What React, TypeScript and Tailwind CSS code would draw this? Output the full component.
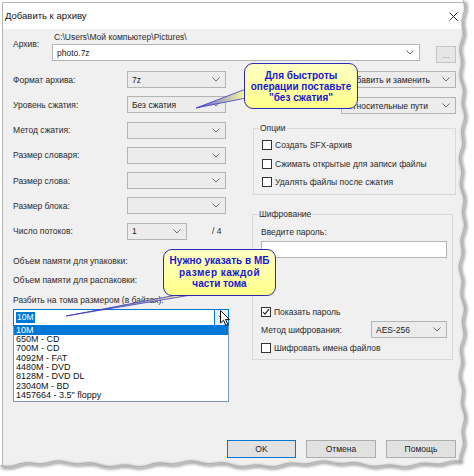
import React from 'react';

const font = "font-['Liberation_Sans',Arial,sans-serif]";

function Chevron() {
  return (
    <svg width="8" height="5" viewBox="0 0 8 5" className="shrink-0">
      <path d="M0.5 0.5 L4 4 L7.5 0.5" fill="none" stroke="#6a6a6a" strokeWidth="1" />
    </svg>
  );
}

function Combo({ text, className, white }: { text?: string; className: string; white?: boolean }) {
  return (
    <div
      className={`h-[17px] flex items-center justify-between pl-[4px] pr-[5px] border border-[#b4b4b4] ${
        white ? 'bg-white' : 'bg-[#ececec]'
      } ${className}`}
    >
      <span className="text-[#1a1a1a]">{text}</span>
      <Chevron />
    </div>
  );
}

function Check({ label, checked }: { label: string; checked?: boolean }) {
  return (
    <div className="h-[12px] flex items-center gap-[3px]">
      <div className="w-[10px] h-[10px] border border-[#333] bg-white flex items-center justify-center">
        {checked && (
          <svg width="8" height="8" viewBox="0 0 8 8">
            <path d="M1 4 L3 6.2 L7 1.2" fill="none" stroke="#222" strokeWidth="1.1" />
          </svg>
        )}
      </div>
      <span>{label}</span>
    </div>
  );
}

function Group({ title, className, children }: { title: string; className: string; children: React.ReactNode }) {
  return (
    <div className={`relative border border-[#d9d9d9] ${className}`}>
      <span className="absolute -top-[7px] left-[5px] px-[1px] bg-[#f0f0f0]">{title}</span>
      {children}
    </div>
  );
}

const rows = [
  { label: 'Формат архива:', value: '7z' },
  { label: 'Уровень сжатия:', value: 'Без сжатия' },
  { label: 'Метод сжатия:', value: '' },
  { label: 'Размер словаря:', value: '' },
  { label: 'Размер слова:', value: '' },
  { label: 'Размер блока:', value: '' },
];

const volumes = [
  '650M - CD',
  '700M - CD',
  '4092M - FAT',
  '4480M - DVD',
  '8128M - DVD DL',
  '23040M - BD',
  '1457664 - 3.5" floppy',
];

// torn paper edge on the right and bottom of the screenshot
function tornPoints() {
  const pts: string[] = [];
  for (let y = 0; y <= 462; y += 5) {
    const x = 462 + Math.sin(y * 0.23) * 1.3 + Math.sin(y * 0.061 + 1) * 1.6;
    pts.push(`${x.toFixed(1)},${y}`);
  }
  for (let x = 460; x >= 0; x -= 5) {
    const y = 464 + Math.sin(x * 0.19) * 1.2 + Math.sin(x * 0.047 + 2) * 2;
    pts.push(`${x},${y.toFixed(1)}`);
  }
  return pts;
}

export default function App() {
  const pts = tornPoints();
  const edge = 'M' + pts.join(' L');

  return (
    <div className={`relative w-[474px] h-[476px] bg-white overflow-hidden ${font} text-[8.5px] leading-[12px] text-[#2a2a2a]`}>
      <div className="ml-[2px] mt-[2px] w-[464px] h-[468px] bg-[#f0f0f0] border border-[#b8b8b8] flex flex-col">
        {/* title bar */}
        <div className="h-[26px] shrink-0 bg-white flex items-center justify-between pl-[2px] pr-[7px] text-[9.5px] text-[#111]">
          <span>Добавить к архиву</span>
          <svg width="9" height="9" viewBox="0 0 9 9">
            <path d="M0.5 0.5 L8.5 8.5 M8.5 0.5 L0.5 8.5" stroke="#222" strokeWidth="1" />
          </svg>
        </div>

        <div className="pl-[10px] pr-[9px] pt-[1px] flex flex-col">
          {/* archive path */}
          <div className="flex items-start">
            <span className="w-[39px] mt-[8px]">Архив:</span>
            <div className="flex flex-col">
              <span className="ml-[2px] h-[14px] pt-[1px]">C:\Users\Мой компьютер\Pictures\</span>
              <Combo white text="photo.7z" className="w-[368px]" />
            </div>
            <div className="ml-[16px] mt-[16px] w-[20px] h-[17px] border border-[#c4c4c4] bg-[#e6e6e6] flex items-center justify-center text-[#8a8a8a] leading-[8px]">
              ...
            </div>
          </div>

          <div className="flex mt-[8px]">
            {/* left column */}
            <div className="w-[216px] flex flex-col">
              <div className="flex flex-col gap-[8.3px]">
                {rows.map((r) => (
                  <div key={r.label} className="h-[17px] flex items-center">
                    <span className="w-[114px]">{r.label}</span>
                    <Combo text={r.value} className="w-[99px]" />
                  </div>
                ))}
                <div className="h-[17px] flex items-center">
                  <span className="w-[114px]">Число потоков:</span>
                  <Combo text="1" className="w-[60px]" />
                  <span className="ml-[25px]">/ 4</span>
                </div>
              </div>

              <span className="mt-[15px]">Объем памяти для упаковки:</span>
              <span className="mt-[7px]">Объем памяти для распаковки:</span>
              <span className="mt-[8px]">Разбить на тома размером (в байтах):</span>

              <div className="mt-[3px] h-[17px] flex items-center justify-between border border-[#0078d7] bg-white pl-[2px]">
                <span className="bg-[#0078d7] text-white px-[1px] leading-[11px]">10M</span>
                <div className="h-[15px] w-[14px] bg-[#e5f1fb] border-l border-[#0078d7] flex items-center justify-center">
                  <Chevron />
                </div>
              </div>
              <div className="border border-[#7a96c0] border-t-0 bg-white flex flex-col pb-[1px] text-[#111] text-[9px] leading-[9.3px]">
                <span className="bg-[#0078d7] text-white pl-[2px]">10M</span>
                {volumes.map((v) => (
                  <span key={v} className="pl-[2px]">
                    {v}
                  </span>
                ))}
              </div>
            </div>

            {/* right column */}
            <div className="ml-[21px] flex-1 flex flex-col">
              <div className="h-[17px] flex items-center justify-end">
                <Combo text="Добавить и заменить" className="w-[115px]" />
              </div>
              <div className="mt-[9px] h-[17px] flex items-center justify-end">
                <Combo text="Относительные пути" className="w-[115px]" />
              </div>

              <Group title="Опции" className="mt-[14px] ml-[3px] pt-[10px] pb-[6px] pl-[8px] flex flex-col gap-[6.5px]">
                <Check label="Создать SFX-архив" />
                <Check label="Сжимать открытые для записи файлы" />
                <Check label="Удалять файлы после сжатия" />
              </Group>

              <Group title="Шифрование" className="mt-[19px] ml-[2px] mr-[3px] pt-[11px] pb-[5px] pl-[8px] pr-[5px] flex flex-col">
                <span>Введите пароль:</span>
                <div className="mt-[3px] h-[17px] border border-[#b4b4b4] bg-white" />
                <div className="mt-[48px]">
                  <Check checked label="Показать пароль" />
                </div>
                <div className="mt-[3px] h-[17px] flex items-center justify-between">
                  <span>Метод шифрования:</span>
                  <Combo text="AES-256" className="w-[76px]" />
                </div>
                <div className="mt-[4px]">
                  <Check label="Шифровать имена файлов" />
                </div>
              </Group>
            </div>
          </div>

          {/* buttons */}
          <div className="mt-[38px] flex justify-end gap-[10px] text-[#1a1a1a]">
            <div className="w-[69px] h-[18px] border-[1.5px] border-[#0078d7] bg-[#e1e1e1] flex items-center justify-center">OK</div>
            <div className="w-[70px] h-[18px] border border-[#adadad] bg-[#e1e1e1] flex items-center justify-center">Отмена</div>
            <div className="w-[70px] h-[18px] border border-[#adadad] bg-[#e1e1e1] flex items-center justify-center">Помощь</div>
          </div>
        </div>
      </div>

      {/* callout tails */}
      <svg className="absolute left-0 top-0" width="474" height="476">
        <defs>
          <linearGradient id="tail1" x1="0" y1="0" x2="1" y2="0">
            <stop offset="0" stopColor="#5a5ad8" />
            <stop offset="1" stopColor="#ffff99" />
          </linearGradient>
          <linearGradient id="tail2" x1="0" y1="0" x2="1" y2="0">
            <stop offset="0" stopColor="#5a5ad8" />
            <stop offset="1" stopColor="#ffff99" />
          </linearGradient>
        </defs>
        <polygon points="246,89 246,98 196,108" fill="url(#tail1)" stroke="#3a3ac0" strokeWidth="0.8" />
        <polygon points="182,294 197,294 66,316" fill="url(#tail2)" stroke="#3a3ac0" strokeWidth="0.8" />
      </svg>

      {/* callouts */}
      <div className="absolute left-[244px] top-[63px] w-[114px] h-[46px] rounded-[9px] border-[1.5px] border-[#2b2bb5] bg-gradient-to-b from-[#ffffc4] to-[#ffff88] flex flex-col items-center justify-center font-bold text-[10px] leading-[11px] text-[#1818d0] text-center">
        <span>Для быстроты</span>
        <span>операции поставьте</span>
        <span>"без сжатия"</span>
      </div>
      <div className="absolute left-[163px] top-[249px] w-[113px] h-[47px] rounded-[9px] border-[1.5px] border-[#2b2bb5] bg-gradient-to-b from-[#ffffc4] to-[#ffff88] flex flex-col items-center justify-center font-bold text-[10px] leading-[11.5px] text-[#1818d0] text-center">
        <span>Нужно указать в МБ</span>
        <span className="tracking-[0.5px]">размер каждой</span>
        <span>части тома</span>
      </div>

      {/* mouse cursor */}
      <svg className="absolute left-[220px] top-[310px]" width="12" height="17" viewBox="0 0 12 17">
        <path d="M0.5 0.5 L0.5 13 L3.5 10.2 L5.8 15.3 L7.8 14.4 L5.6 9.5 L9.5 9.5 Z" fill="white" stroke="#111" strokeWidth="1" />
      </svg>

      {/* torn edge */}
      <svg className="absolute left-0 top-0" width="474" height="476">
        <defs>
          <filter id="blur" x="-10%" y="-10%" width="120%" height="120%">
            <feGaussianBlur stdDeviation="1.4" />
          </filter>
        </defs>
        <path d={`M0 0 H474 V476 H0 Z M0 0 L${pts.join(' L')} L0 0 Z`} fill="white" fillRule="evenodd" />
        <path d={edge} transform="translate(1.5 1.5)" fill="none" stroke="#8a8a8a" strokeWidth="2.5" filter="url(#blur)" />
        <path d={edge} fill="none" stroke="#a8a8a8" strokeWidth="0.8" />
      </svg>
    </div>
  );
}
